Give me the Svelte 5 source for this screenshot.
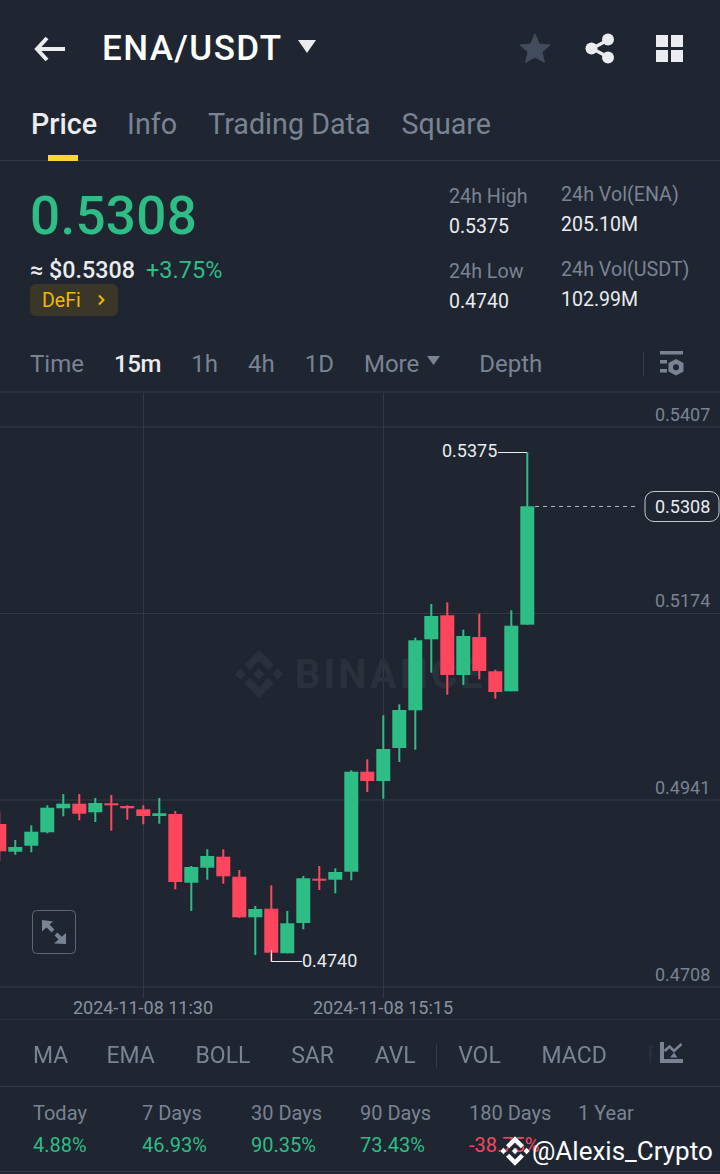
<script>
	const tabs = ['Price', 'Info', 'Trading Data', 'Square'];
	const intervals = ['Time', '15m', '1h', '4h', '1D'];
	const indicators = ['MA', 'EMA', 'BOLL', 'SAR', 'AVL'];
	const indicators2 = ['VOL', 'MACD', 'RSI'];
	const returns = [
		['Today', '4.88%', 'up'],
		['7 Days', '46.93%', 'up'],
		['30 Days', '90.35%', 'up'],
		['90 Days', '73.43%', 'up'],
		['180 Days', '-38.75%', 'down'],
		['1 Year', '', 'up']
	];

	// [body top, body bottom, wick top, wick bottom, up?] spaced 16px, first one centred at x=-0.7
	const candles = [
		[824, 851.3, 811.7, 861, 0],
		[847, 851.7, 840, 854.7, 1],
		[831.7, 845.7, 825.3, 852.3, 1],
		[807.7, 832.3, 805.3, 833.3, 1],
		[803.7, 808.3, 794, 816.3, 1],
		[803.7, 813.7, 794, 820.3, 0],
		[803, 812.3, 798, 822, 1],
		[803.3, 805, 795, 830.7, 0],
		[806, 808.3, 805.3, 819.7, 0],
		[809.3, 816, 805.3, 824.3, 0],
		[813.3, 816, 798, 823.7, 1],
		[814, 882, 811, 889.3, 0],
		[867, 882.7, 866, 911, 1],
		[856, 867.7, 849.3, 879.7, 1],
		[856.7, 876.3, 849.3, 883.7, 0],
		[876.7, 917.3, 870, 917.7, 0],
		[909, 917.3, 906, 955, 1],
		[908.7, 952.7, 885.3, 961.7, 0],
		[923.3, 953.3, 911, 953.3, 1],
		[878.3, 923, 876, 929.3, 1],
		[878.7, 879.7, 866, 890, 0],
		[872, 879.7, 868.3, 893.3, 1],
		[771.7, 871.7, 770.3, 880.3, 1],
		[771.7, 781, 759.3, 792, 0],
		[749, 781, 715.3, 798.7, 1],
		[710, 748, 704.3, 762, 1],
		[640.3, 710.3, 637.7, 749.7, 1],
		[616, 639.3, 604, 672.7, 1],
		[615.3, 675, 602.3, 694.7, 0],
		[636, 675, 629.7, 685, 1],
		[637, 671, 613.7, 679.3, 0],
		[671.3, 692, 669.7, 698.7, 0],
		[625.7, 691.3, 610.3, 691.3, 1],
		[506.3, 624.7, 452.3, 624.7, 1]
	];

	const gridY = [427, 613.5, 800, 987];
	const axis = [
		['0.5407', 421],
		['0.5174', 607],
		['0.4941', 794],
		['0.4708', 981]
	];
	const logo = [
		'M7.34 10.08 12 5.43l4.66 4.66 2.71-2.71L12 0 4.63 7.37z',
		'M16.66 13.92 12 18.57l-4.66-4.66-2.71 2.71L12 24l7.37-7.37z',
		'M0 12l2.71-2.71L5.42 12l-2.71 2.71z',
		'M18.58 12l2.71-2.71L24 12l-2.71 2.71z',
		'M14.75 12 12 9.25 9.25 12 12 14.75z'
	];
</script>

<div class="page">
	<header class="top">
		<svg class="back" width="32" height="26" viewBox="0 0 32 26">
			<path d="M13 2 3 13 13 24M3 13h28" fill="none" stroke="#eaecef" stroke-width="4" />
		</svg>
		<h1>ENA/USDT</h1>
		<svg class="caret" width="18" height="13" viewBox="0 0 18 13">
			<path d="M0 0h18L9 13z" fill="#eaecef" />
		</svg>
		<div class="actions">
			<svg width="32" height="31" viewBox="0 0 32 31">
				<path
					d="M16 1l4.4 10 10.6 1-8 7 2.4 10.4L16 24l-9.400 5.400L9 19l-8-7 10.600-1z"
					fill="#434c5c"
					stroke="#434c5c"
					stroke-linejoin="round"
				/>
			</svg>
			<svg class="share" width="30" height="31" viewBox="0 0 30 31">
				<path d="M23 7 7 15.500 23 24" fill="none" stroke="#eaecef" stroke-width="3.200" />
				<circle cx="23" cy="6.500" r="6" fill="#eaecef" />
				<circle cx="6.500" cy="15.500" r="6" fill="#eaecef" />
				<circle cx="23" cy="24.500" r="6" fill="#eaecef" />
			</svg>
			<div class="squares"><i></i><i></i><i></i><i></i></div>
		</div>
	</header>

	<nav class="tabs">
		{#each tabs as tab, i}
			<span class:on={i === 0}>{tab}</span>
		{/each}
	</nav>

	<section class="summary">
		<div class="left">
			<div class="price">0.5308</div>
			<div class="sub"><b>≈ $0.5308</b><span>+3.75%</span></div>
			<div class="chip">
				DeFi
				<svg width="9" height="12" viewBox="0 0 9 12">
					<path d="M2 1.500 6.500 6 2 10.500" fill="none" stroke="#f0b90b" stroke-width="2" />
				</svg>
			</div>
		</div>
		<dl class="col one">
			<dt>24h High</dt>
			<dd>0.5375</dd>
			<dt>24h Low</dt>
			<dd>0.4740</dd>
		</dl>
		<dl class="col two">
			<dt>24h Vol(ENA)</dt>
			<dd>205.10M</dd>
			<dt>24h Vol(USDT)</dt>
			<dd>102.99M</dd>
		</dl>
	</section>

	<div class="intervals">
		{#each intervals as item}
			<span class:on={item === '15m'}>{item}</span>
		{/each}
		<span class="more">
			More
			<svg width="13" height="9" viewBox="0 0 13 9"><path d="M0 0h13L6.500 9z" fill="#7a8394" /></svg>
		</span>
		<span class="depth">Depth</span>
		<i class="sep"></i>
		<svg class="tool" width="24" height="25" viewBox="0 0 24 25">
			<path d="M0 0h23v3.500H0zM0 9h7v3.500H0zM0 18h7v3.500H0z" fill="#7a8394" />
			<path
				d="M16 8l7.500 4v8.500l-7.500 4-7.500-4V12zm0 8.300m-3 0a3 3 0 1 0 6 0 3 3 0 1 0-6 0z"
				fill="#7a8394"
				fill-rule="evenodd"
			/>
		</svg>
	</div>

	<div class="chart">
		<svg width="720" height="626" viewBox="0 393 720 626">
			{#each gridY as y}
				<line x1="0" x2="720" y1={y} y2={y} class="grid" />
			{/each}
			<line x1="143.500" x2="143.500" y1="393" y2="998" class="grid" />
			<line x1="383.500" x2="383.500" y1="393" y2="998" class="grid" />

			<g transform="translate(235 650) scale(2)" fill="#2b313c">
				{#each logo as d}<path {d} />{/each}
			</g>
			<text x="295" y="688" class="mark">BINANCE</text>

			{#each candles as [top, bottom, hi, lo, up], i}
				{@const x = -0.7 + i * 16}
				<g fill={up ? '#2ebd85' : '#ff465f'}>
					<rect x={x - 1} y={hi} width="2" height={lo - hi} />
					<rect x={x - 7} y={top} width="14" height={Math.max(bottom - top, 2)} />
				</g>
			{/each}

			{#each axis as [label, y]}
				<text x="655" {y} class="axis">{label}</text>
			{/each}
			<text x="143" y="1014" class="time">2024-11-08 11:30</text>
			<text x="383" y="1014" class="time">2024-11-08 15:15</text>

			<path d="M498 452.500h29" class="lead" />
			<text x="442" y="457" class="val">0.5375</text>
			<path d="M271.500 950v11.500H302" class="lead" />
			<text x="302" y="967" class="val">0.4740</text>

			<line x1="535" x2="636" y1="506.500" y2="506.500" class="dash" />
			<rect x="645" y="491.500" width="74" height="30" rx="9" class="tag" />
			<text x="655" y="513" class="val">0.5308</text>

			<rect x="32.500" y="910.500" width="43" height="43" rx="4" class="expand" />
			<path d="M42 920l11 1.500-11 10zM66 944l-12-.5 12-10.500z" fill="#7a8394" />
			<path d="M46 924l7 7M56 934l7 7" fill="none" stroke="#7a8394" stroke-width="4" />
		</svg>
	</div>

	<div class="indicators">
		<div class="names">
			{#each indicators as item}<span>{item}</span>{/each}
			<i class="sep"></i>
			{#each indicators2 as item}<span>{item}</span>{/each}
		</div>
		<svg class="graph" width="23" height="22" viewBox="0 0 23 22">
			<path d="M0 0h4v17h19v4H0z" fill="#7a8394" />
			<path d="M4.500 9 9.500 4.500 14 9 21.500 2" fill="none" stroke="#7a8394" stroke-width="2.600" />
			<path d="M10 15.500 14 10.500 17.500 15.500z" fill="#7a8394" />
		</svg>
	</div>

	<div class="returns">
		{#each returns as [label, value, dir]}
			<div class="cell">
				<span>{label}</span>
				<b class={dir}>{value}</b>
			</div>
		{/each}
	</div>

	<div class="credit">
		<svg width="30" height="30" viewBox="0 0 24 24">
			{#each logo as d}<path {d} fill="#fff" stroke="#1f2631" stroke-width="0.4" />{/each}
		</svg>
		<span>@Alexis_Crypto</span>
	</div>
</div>

<style>
	:global(body) {
		margin: 0;
		background: #1f2631;
	}

	.page {
		position: relative;
		width: 720px;
		height: 1174px;
		overflow: hidden;
		background: #1f2631;
		color: #7a8394;
		font-family: Roboto, 'Noto Sans', sans-serif;
	}

	.top {
		height: 97px;
		display: flex;
		align-items: center;
		padding-left: 34px;
	}

	.back {
		margin-right: 36px;
	}

	h1 {
		margin: 0 16px 0 0;
		font-size: 35px;
		font-weight: 500;
		letter-spacing: 1.4px;
		color: #fff;
	}

	.caret {
		margin-top: -5px;
	}

	.actions {
		margin-left: auto;
		margin-right: 37px;
		display: flex;
		align-items: center;
		gap: 34px;
	}

	.share {
		margin-right: 7px;
	}

	.squares {
		width: 27px;
		height: 27px;
		display: grid;
		grid-template-columns: 1fr 1fr;
		gap: 3px;
	}

	.squares i {
		background: #eaecef;
	}

	.tabs {
		height: 64px;
		box-sizing: border-box;
		display: flex;
		gap: 31px;
		padding: 8px 0 0 31px;
		border-bottom: 1px solid #343b47;
		font-size: 28.700px;
		line-height: 38px;
	}

	.tabs .on {
		position: relative;
		color: #eaecef;
		font-weight: 500;
		margin-right: -1px;
	}

	.tabs .on::after {
		content: '';
		position: absolute;
		left: 17px;
		bottom: -1px;
		width: 30px;
		height: 6px;
		background: #fcd535;
	}

	.summary {
		height: 164px;
		box-sizing: border-box;
		display: flex;
		padding-top: 22px;
	}

	.left {
		width: 449px;
		padding-left: 31px;
		box-sizing: border-box;
	}

	.price {
		margin-top: 1px;
		font-size: 53px;
		line-height: 64px;
		font-weight: 500;
		color: #2ebd85;
		letter-spacing: 0.3px;
		margin-left: -1px;
	}

	.sub {
		margin-top: 6px;
		display: flex;
		gap: 11px;
		font-size: 23.500px;
		line-height: 32px;
		margin-left: -1px;
		color: #2ebd85;
	}

	.sub b {
		font-size: 23.300px;
		font-weight: 500;
		color: #eaecef;
	}

	.chip {
		margin-top: -2px;
		margin-left: -1px;
		width: 88px;
		height: 32px;
		box-sizing: border-box;
		padding-left: 12px;
		display: flex;
		align-items: center;
		gap: 16px;
		border-radius: 6px;
		background: #3a3628;
		color: #f0b90b;
		font-size: 19.500px;
	}

	.col {
		margin: 0;
		padding-top: 1px;
		width: 112px;
		font-size: 19.700px;
	}

	.col.two {
		margin-top: -2px;
	}

	dt {
		line-height: 24px;
		margin-top: 1px;
		white-space: nowrap;
	}

	dd {
		margin: 6px 0 21px;
		line-height: 24px;
		color: #eaecef;
		white-space: nowrap;
		font-size: 19.500px;
	}

	.intervals {
		height: 69px;
		box-sizing: border-box;
		display: flex;
		align-items: center;
		gap: 30px;
		padding: 12px 36px 0 30px;
		border-bottom: 2px solid #2a303b;
		font-size: 24px;
		margin-top: -1px;
	}

	.intervals .on {
		color: #eaecef;
		font-weight: 500;
		letter-spacing: -0.3px;
	}

	.more {
		display: flex;
		align-items: center;
		gap: 8px;
	}

	.more svg {
		margin-top: -6px;
	}

	.depth {
		margin-left: 9px;
	}

	.sep {
		width: 1px;
		height: 24px;
		background: #343b47;
	}

	.intervals .sep {
		margin-left: auto;
	}

	.tool {
		margin-left: -14px;
	}

	.chart {
		height: 626px;
		border-bottom: 1px solid #2a303b;
	}

	.chart svg {
		display: block;
	}

	.grid {
		stroke: #333a46;
		stroke-width: 1;
	}

	.mark {
		font-size: 40px;
		font-weight: 700;
		letter-spacing: 3px;
		fill: #2b313c;
	}

	.axis,
	.time {
		font-size: 18px;
		fill: #7a8394;
	}

	.time {
		text-anchor: middle;
		fill: #8a92a0;
	}

	.val {
		font-size: 18px;
		fill: #eaecef;
	}

	.lead {
		fill: none;
		stroke: #eaecef;
		stroke-width: 1;
	}

	.dash {
		stroke: #b0b5bd;
		stroke-width: 1;
		stroke-dasharray: 4 4;
	}

	.tag {
		fill: #1f2631;
		stroke: #c4c8ce;
		stroke-width: 1;
	}

	.expand {
		fill: none;
		stroke: #5e6673;
		stroke-width: 1;
	}

	.indicators {
		height: 67px;
		box-sizing: border-box;
		position: relative;
		display: flex;
		align-items: center;
		padding: 5px 0 0 33px;
		border-bottom: 1px solid #343b47;
	}

	.names {
		width: 622px;
		overflow: hidden;
		display: flex;
		align-items: center;
		gap: 40.700px;
		font-size: 23px;
		white-space: nowrap;
		mask-image: linear-gradient(to right, #000 94%, transparent 100%);
	}

	.names span:first-child {
		margin-right: -2.500px;
	}

	.names .sep {
		margin: 0 -20px;
		flex: none;
	}

	.graph {
		margin-left: 5px;
		margin-top: -6px;
	}

	.returns {
		height: 85px;
		box-sizing: border-box;
		display: grid;
		grid-template-columns: repeat(6, 109px);
		padding: 14px 0 0 33px;
		border-bottom: 1px solid #343b47;
	}

	.cell {
		display: flex;
		flex-direction: column;
		gap: 7px;
		font-size: 20px;
		line-height: 25px;
	}

	.cell b {
		font-weight: 400;
	}

	.up {
		color: #2ebd85;
	}

	.down {
		color: #f6465d;
	}

	.credit {
		position: absolute;
		left: 500px;
		top: 1136px;
		display: flex;
		align-items: center;
		gap: 2px;
		color: #fff;
		font-size: 26px;
	}
</style>
